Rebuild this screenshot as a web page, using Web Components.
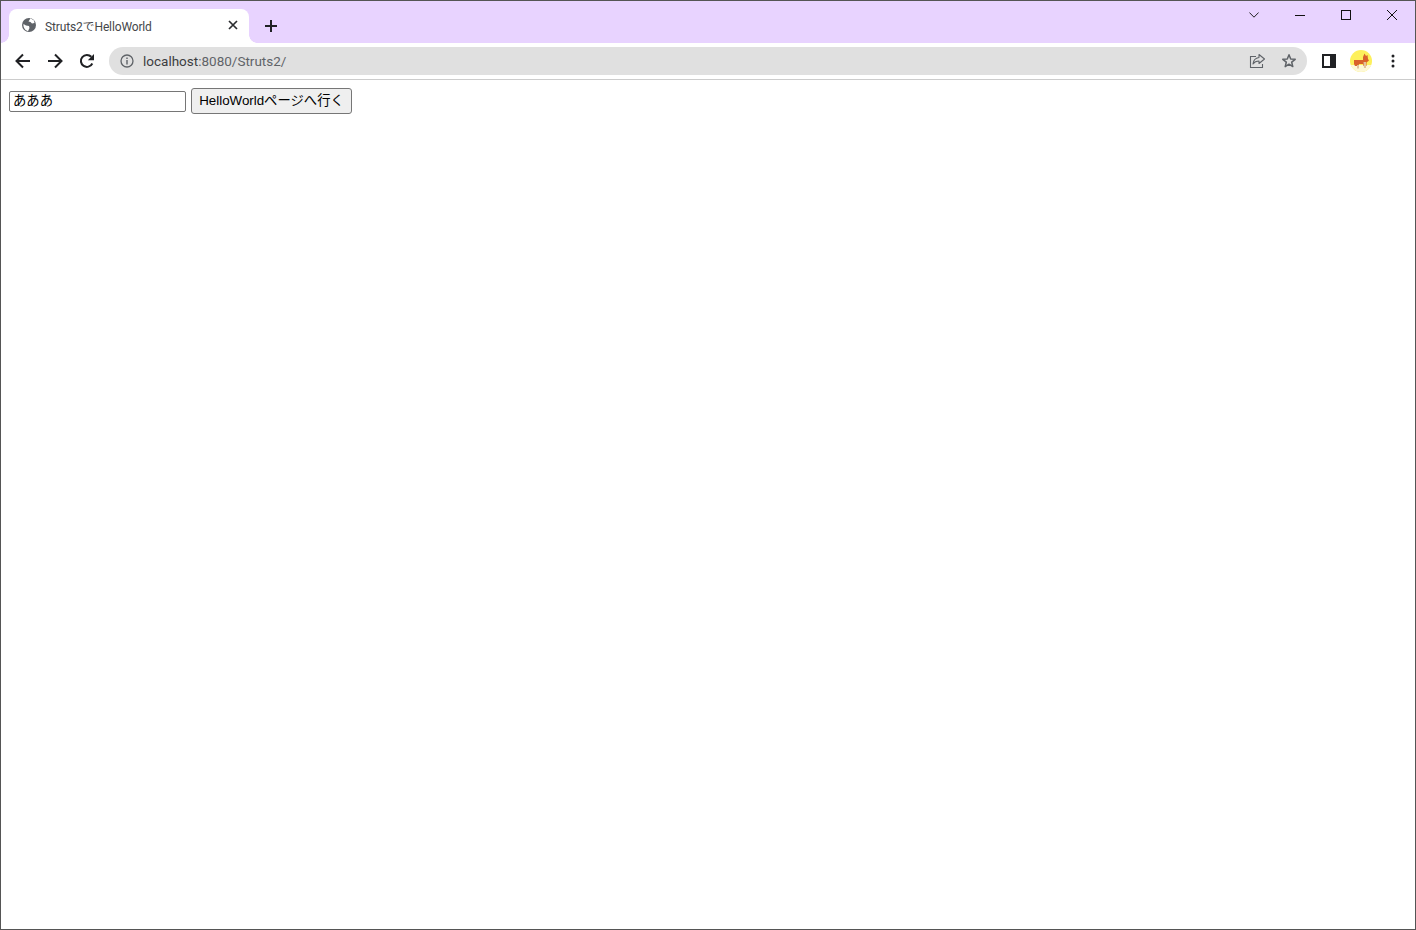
<!DOCTYPE html>
<html lang="ja"><head><meta charset="utf-8"><title>Struts2でHelloWorld</title>
<style>html,body{margin:0;padding:0;height:100%;background:#fff}</style></head>
<body><browser-window></browser-window>
<script>
const def=(n,html)=>customElements.define(n,class extends HTMLElement{constructor(){super();this.attachShadow({mode:'open'}).innerHTML=html}});
const UI='"Roboto","Noto Sans CJK JP",sans-serif';
def('browser-tab',`<style>
:host{display:flex;align-items:center;position:relative;width:240px;height:34px;box-sizing:border-box;background:#fff;border-radius:8px 8px 0 0;padding:0 10px 2px 12px;margin-top:8px;font:12px ${UI};color:#45474a}
:host::before,:host::after{content:"";position:absolute;bottom:0;width:8px;height:8px;background:radial-gradient(circle at var(--c) 0,#e8d3ff 7.5px,#fff 8px)}
:host::before{left:-8px;--c:0}:host::after{right:-8px;--c:100%}
svg{display:block;flex:none}
.t{flex:1;margin-left:8px;white-space:nowrap;overflow:hidden;letter-spacing:-.14px}
</style>
<svg width="16" height="16" viewBox="0 0 16 16"><circle cx="8" cy="8" r="7" fill="#5f6368"/><path d="M9.500 1.300 13 3.500l.5 2.500-2.500.5-1.500-1.500-2-.5ZM2.500 7 5 8.500 8 9l.5 2-1.500 3.200C4.500 13.500 2 11 2.500 7Z" fill="#fff"/></svg>
<span class="t">Struts2でHelloWorld</span>
<svg width="12" height="12" viewBox="0 0 12 12"><path d="M2 2l8 8M10 2l-8 8" stroke="#2b2d30" stroke-width="1.700" fill="none"/></svg>`);
def('window-controls',`<style>
:host{display:flex;margin-left:auto;height:28px;align-items:center}
div{width:46px;height:28px;display:flex;align-items:center;justify-content:center}
svg{display:block}
</style>
<div><svg width="10" height="6" viewBox="0 0 10 6"><path d="M.4.500 5 5.200 9.600.5" stroke="#222" fill="none"/></svg></div>
<div><svg width="10" height="10" viewBox="0 0 10 10"><path d="M0 5.500h10" stroke="#111" fill="none"/></svg></div>
<div><svg width="10" height="10" viewBox="0 0 10 10"><rect x=".5" y=".5" width="9" height="9" stroke="#111" fill="none"/></svg></div>
<div><svg width="10" height="10" viewBox="0 0 10 10"><path d="M0 0l10 10M10 0 0 10" stroke="#111" fill="none"/></svg></div>`);
def('tab-strip',`<style>
:host{display:flex;height:42px;background:#e8d3ff;padding-left:8px;box-sizing:border-box;align-items:flex-start}
.plus{width:28px;height:28px;margin:11px 0 0 8px;display:flex;align-items:center;justify-content:center}
</style>
<browser-tab></browser-tab>
<div class="plus"><svg width="12" height="12" viewBox="0 0 12 12"><path d="M6 0v12M0 6h12" stroke="#202124" stroke-width="2" fill="none"/></svg></div>
<window-controls></window-controls>`);
def('address-box',`<style>
:host{display:flex;align-items:center;flex:1;height:28px;border-radius:14px;background:#e0e0e0;padding:0 10px 0 11px;margin:0 6px;font:13.500px ${UI};color:#5f6368}
svg{display:block;flex:none}
.u{margin-left:9px;white-space:nowrap}b{font-weight:400;color:#3c3d40}
.r{margin-left:auto;display:flex;gap:16px;align-items:center}
</style>
<svg width="14" height="14" viewBox="0 0 14 14"><circle cx="7" cy="7" r="6" fill="none" stroke="#5f6368" stroke-width="1.300"/><path d="M7 6v4.400M7 3.500V5" stroke="#5f6368" stroke-width="1.400"/></svg>
<span class="u"><b>localhost</b>:8080/Struts2/</span>
<span class="r">
<svg width="16" height="16" viewBox="0 0 16 16"><path d="M7 3.500H1.500v11h12V11" fill="none" stroke="#5f6368" stroke-width="1.100"/><path d="M10 1.500 15.500 6 10 10.500V8C7 8 5.300 9 4 11c.3-3.500 2.500-6 6-6.500Z" fill="none" stroke="#5f6368" stroke-width="1.100" stroke-linejoin="round"/></svg>
<svg width="16" height="16" viewBox="0 0 16 16"><path d="M8 1.800 9.700 6l4.500.3-3.500 2.900 1.100 4.400L8 11.200l-3.800 2.400 1.100-4.400-3.500-2.900L6.300 6Z" fill="none" stroke="#5f6368" stroke-width="1.500" stroke-linejoin="round"/></svg>
</span>`);
def('tool-bar',`<style>
:host{display:flex;align-items:center;height:37px;box-sizing:border-box;border-bottom:1px solid #ccc;background:#fff;padding:0 0 0 6px}
.b{width:32px;height:28px;display:flex;align-items:center;justify-content:center;flex:none}
svg{display:block}
</style>
<div class="b"><svg width="16" height="16" viewBox="0 0 16 16"><path d="M15 8H2M8 1.500 1.500 8 8 14.500" fill="none" stroke="#202124" stroke-width="2"/></svg></div>
<div class="b"><svg width="16" height="16" viewBox="0 0 16 16"><path d="M1 8h13M8 1.500 14.500 8 8 14.500" fill="none" stroke="#202124" stroke-width="2"/></svg></div>
<div class="b"><svg width="16" height="16" viewBox="0 0 16 16"><path d="M13.300 10.500A6 6 0 1 1 12.300 3.800" fill="none" stroke="#202124" stroke-width="2"/><path d="M15 1v6.200H8.800Z" fill="#202124"/></svg></div>
<address-box></address-box>
<div class="b"><svg width="14" height="14" viewBox="0 0 14 14"><path d="M0 0h14v14H0Z" fill="#202124"/><rect x="2" y="2" width="6" height="10" fill="#fff"/></svg></div>
<div class="b"><svg width="22" height="22" viewBox="0 0 22 22"><defs><clipPath id="c"><circle cx="11" cy="11" r="11"/></clipPath></defs><circle cx="11" cy="11" r="11" fill="#fdf05c"/><g clip-path="url(#c)"><rect y="15" width="22" height="7" fill="#fdf8d8"/><path d="M4 10h9V7l1.500-3.500L16 6l1.500-1 .5 4 1 1.500-2.500 2V16h-3l-.5-2H9l-.5 2H5l-1-2Z" fill="#d9622b"/><path d="M13.500 12H16v6h-2ZM7 15h2v3.500H7Z" fill="#e3c39c"/></g></svg></div>
<div class="b"><svg width="4" height="14" viewBox="0 0 4 14"><circle cx="2" cy="2" r="1.500" fill="#202124"/><circle cx="2" cy="7" r="1.500" fill="#202124"/><circle cx="2" cy="12" r="1.500" fill="#202124"/></svg></div>
<div style="width:6px;flex:none"></div>`);
def('hello-form',`<style>
:host{display:flex;align-items:center;padding:8px 0 0 8px;gap:5px}
input,button{font:13.333px "Liberation Sans","Noto Sans CJK JP",sans-serif;color:#000;box-sizing:border-box;margin:0}
input{width:177px;height:21px;border:1px solid #767676;border-radius:2px;padding:0 3px 4px;background:#fff}
button{width:161px;height:26px;border:1px solid #767676;border-radius:3px;background:#efefef;padding:0 6px 4px;white-space:nowrap}
</style>
<input type="text" value="あああ"><button type="button">HelloWorldページへ行く</button>`);
def('browser-window',`<style>
:host{display:flex;flex-direction:column;box-sizing:border-box;height:930px;border:1px solid #555;background:#fff;overflow:hidden}
</style>
<tab-strip></tab-strip><tool-bar></tool-bar><hello-form></hello-form>`);
</script></body></html>
